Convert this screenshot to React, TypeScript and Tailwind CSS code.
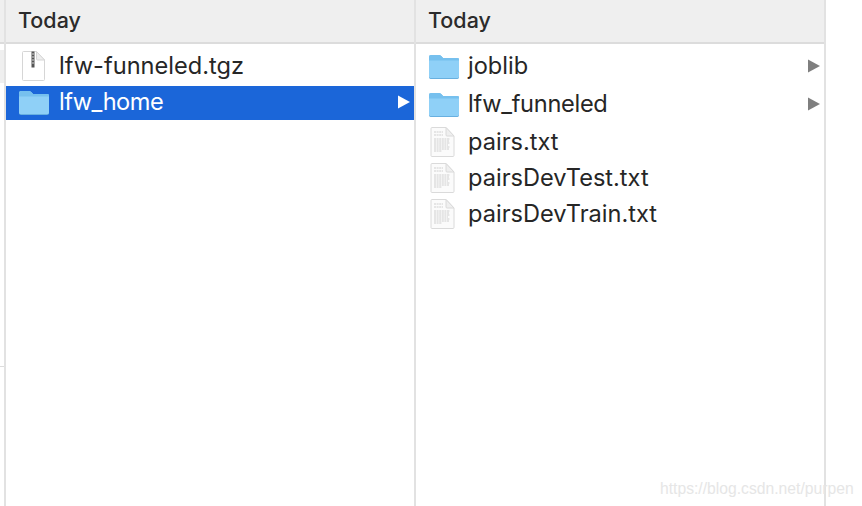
const FONT = "font-['Inter','Liberation_Sans',sans-serif]";

function Folder() {
  return (
    <svg width="32" height="28" viewBox="0 0 32 28" className="shrink-0">
      <path d="M1 5.500C1 3.800 2 3 3.500 3h7.300c1 0 1.600.4 2.300 1.100L15 6h14.200C30.500 6 31 6.800 31 8v17c0 1.200-.6 2-1.900 2H2.900C1.700 27 1 26.200 1 25z" fill="#5ba6d8" />
      <path d="M1 5.500C1 3.800 2 3 3.500 3h7.300c1 0 1.600.4 2.300 1.100L15 6h14.200C30.500 6 31 6.800 31 8v16.500c0 1.100-.6 1.700-1.900 1.700H2.900c-1.200 0-1.900-.6-1.900-1.700z" fill="#8fd0f7" />
      <path d="M1 8.500h30V8c0-1.200-.5-2-1.800-2H15l-1.900-1.900C12.400 3.400 11.800 3 10.800 3H3.500C2 3 1 3.800 1 5.500z" fill="#76c0ee" />
    </svg>
  );
}

function ZipFile() {
  return (
    <svg width="26" height="32" viewBox="0 0 26 32" className="shrink-0 ml-[2px]">
      <path d="M2.500 1.500h13l8 8.500v19.500c0 .7-.4 1-1 1h-20c-.6 0-1-.3-1-1V2.500c0-.6.4-1 1-1z" fill="#fff" stroke="#d6d6d6" />
      <path d="M15.500 1.500V9c0 .7.400 1 1 1h7z" fill="#eeeeee" stroke="#d6d6d6" />
      <rect x="10.500" y="1.500" width="3" height="16" fill="#555555" />
      <path d="M11 4h2M11 7h2M11 10h2M11 13h2" stroke="#d8d8d8" strokeWidth="1" />
    </svg>
  );
}

function TextFile() {
  return (
    <svg width="26" height="32" viewBox="0 0 26 32" className="shrink-0 ml-[2px]">
      <path d="M2 1.500h14l8 8.500v19.500c0 .6-.4 1-1 1H2c-.6 0-1-.4-1-1v-27c0-.6.4-1 1-1z" fill="#fbfbfb" stroke="#dadada" />
      <path d="M16 1.500V9c0 .7.300 1 1 1h7z" fill="#efefef" stroke="#dadada" />
      <path d="M4 6h9M4 9h9M4 13h16M4 15h15M4 17h16M4 19h14M4 21h16M4 23h15M4 25h8" stroke="#cfcfcf" strokeWidth="1" strokeDasharray="2 .6" />
    </svg>
  );
}

function Arrow({ white }: { white?: boolean }) {
  return (
    <svg width="14" height="14" viewBox="0 0 14 14" className="shrink-0">
      <path d="M1 0.500L13 7L1 13.500z" fill={white ? "#ffffff" : "#7f7f7f"} />
    </svg>
  );
}

function Header() {
  return (
    <div className="h-[44px] shrink-0 bg-[#efefef] border-b-2 border-[#dcdcdc] flex items-center pb-[1px] pl-[12px] text-[21.500px] font-medium text-[#2b2b2b]">
      Today
    </div>
  );
}

type RowProps = {
  icon: React.ReactNode;
  name: string;
  className: string;
  textClass?: string;
  arrow?: boolean;
  selected?: boolean;
};

function Row({ icon, name, className, textClass, arrow, selected }: RowProps) {
  return (
    <div
      className={`flex items-center pr-[3px] ${className} ${selected ? "bg-[#1b66d9] text-white" : "text-[#262626]"}`}
    >
      <span className="w-[40px] shrink-0 flex">{icon}</span>
      <span className={`flex-1 text-[23.600px] leading-none whitespace-nowrap ${textClass ?? ""}`}>{name}</span>
      {arrow && <Arrow white={selected} />}
    </div>
  );
}

export default function App() {
  return (
    <div className={`relative flex w-[862px] h-[506px] overflow-hidden bg-white ${FONT}`}>
      <div className="w-[4px] shrink-0 flex flex-col">
        <div className="h-[44px] border-b-2 border-[#dcdcdc] bg-[#efefef]" />
        <div className="mt-[6px] h-[33px] bg-[#efefef]" />
        <div className="mt-[283px] h-px bg-[#dcdcdc]" />
      </div>
      <div className="w-[412px] shrink-0 flex flex-col border-x-2 border-[#e2e2e2]">
        <Header />
        <Row className="h-[42px] pl-[13px] pt-[2px]" icon={<ZipFile />} name="lfw-funneled.tgz" />
        <Row className="h-[34px] pl-[12px] pb-[2px]" icon={<Folder />} name="lfw_home" textClass="ml-[1px] tracking-[-0.5px]" arrow selected />
      </div>
      <div className="w-[410px] shrink-0 flex flex-col border-r-2 border-[#e2e2e2]">
        <Header />
        <div className="pt-[3px] flex flex-col pl-[12px]">
          <Row className="h-[38px]" icon={<Folder />} name="joblib" arrow />
          <Row className="h-[38px]" icon={<Folder />} name="lfw_funneled" textClass="tracking-[-0.3px]" arrow />
          <Row className="h-[36px] mt-[1px]" icon={<TextFile />} name="pairs.txt" />
          <Row className="h-[36px]" icon={<TextFile />} name="pairsDevTest.txt" />
          <Row className="h-[36px]" icon={<TextFile />} name="pairsDevTrain.txt" />
        </div>
      </div>
      <span className="absolute left-[660px] top-[477px] text-[15.700px] text-[#e6e6e6] font-['Liberation_Sans',sans-serif] whitespace-nowrap">
        https://blog.csdn.net/purpen
      </span>
    </div>
  );
}
